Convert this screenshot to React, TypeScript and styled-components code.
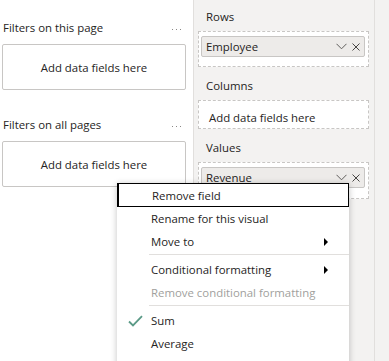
import React from "react";
import styled, { createGlobalStyle } from "styled-components";

const Global = createGlobalStyle`
  html, body { margin: 0; padding: 0; }
  body {
    font-family: "Open Sans", "Noto Sans", "Liberation Sans", sans-serif;
    color: #252423;
    background: #ffffff;
  }
`;

const Page = styled.div`
  position: relative;
  display: flex;
  width: 389px;
  height: 361px;
  overflow: hidden;
  font-size: 11.4px;
`;

const FilterPane = styled.div`
  width: 194px;
  flex: none;
  background: #ffffff;
  border-right: 1px solid #e1dfdd;
  padding: 19px 8px 0 2px;
  box-sizing: border-box;
  display: flex;
  flex-direction: column;
`;

const FilterHeader = styled.div<{ $first?: boolean }>`
  display: flex;
  align-items: center;
  justify-content: space-between;
  height: 16px;
  padding-left: 1px;
  margin-top: ${(p) => (p.$first ? "0" : "26px")};
  margin-bottom: 9px;
`;

const Ellipsis = styled.span`
  display: flex;
  gap: 3px;
  margin-right: 4px;
  margin-top: 4px;
`;

const Dot = styled.span`
  width: 1px;
  height: 1px;
  background: #8a8886;
`;

const FilterBox = styled.div`
  height: 46px;
  box-sizing: border-box;
  border: 1px solid #c8c6c4;
  border-radius: 2px;
  display: flex;
  align-items: center;
  justify-content: center;
  width: 184px;
`;

const FieldsPane = styled.div`
  width: 181px;
  flex: none;
  background: #f3f2f1;
  border-right: 1px solid #e1dfdd;
  box-sizing: border-box;
  padding: 9px 5px 0 4px;
  display: flex;
  flex-direction: column;
`;

const Gutter = styled.div`
  flex: 1;
  background: #f3f2f1;
`;

const WellLabel = styled.div<{ $first?: boolean }>`
  height: 16px;
  line-height: 16px;
  padding-left: 8px;
  margin-bottom: 6px;
  margin-top: ${(p) => (p.$first ? "0" : "11px")};
`;

const Well = styled.div<{ $height: number }>`
  height: ${(p) => p.$height}px;
  box-sizing: border-box;
  border: 1px dashed #c8c6c4;
  background: #ffffff;
  padding: 4px 3px 0 2px;
  display: flex;
  flex-direction: column;
`;

const WellHint = styled.div`
  padding-left: 8px;
  line-height: 26px;
`;

const Pill = styled.div`
  height: 21px;
  box-sizing: border-box;
  border: 1px solid #c8c6c4;
  border-radius: 2px;
  background: #edebe9;
  display: flex;
  align-items: center;
  padding: 0 4px 0 4px;
  gap: 5px;
`;

const PillName = styled.span`
  flex: 1;
`;

const Menu = styled.div`
  position: absolute;
  left: 117px;
  top: 183px;
  width: 232px;
  height: 190px;
  background: #ffffff;
  box-shadow: 0 0 6px rgba(0, 0, 0, 0.14), 0 3px 8px rgba(0, 0, 0, 0.1);
  box-sizing: border-box;
`;

const MenuItem = styled.div<{ $focused?: boolean; $disabled?: boolean }>`
  position: relative;
  height: 24px;
  box-sizing: border-box;
  display: flex;
  align-items: center;
  padding-left: 33px;
  color: ${(p) => (p.$disabled ? "#a19f9d" : "#252423")};
  border: 1px solid ${(p) => (p.$focused ? "#000000" : "transparent")};
  border-left-width: ${(p) => (p.$focused ? "2px" : "1px")};
  margin-bottom: -1px;
`;

const Separator = styled.div`
  height: 1px;
  background: #e1dfdd;
  margin: 2px 0 2px 32px;
`;

const SubArrow = styled.span`
  position: absolute;
  left: 206px;
  top: 8px;
  width: 0;
  height: 0;
  border-top: 4px solid transparent;
  border-bottom: 4px solid transparent;
  border-left: 4px solid #000000;
`;

const Check = styled.svg`
  position: absolute;
  left: 10px;
  top: 6px;
`;

const Chevron = () => (
  <svg width="11" height="7" viewBox="0 0 11 7">
    <path d="M0.5 0.8 L5.5 5.8 L10.5 0.8" fill="none" stroke="#605e5c" strokeWidth="1" />
  </svg>
);

const Close = () => (
  <svg width="8" height="8" viewBox="0 0 8 8">
    <path d="M0.5 0.5 L7.5 7.5 M7.5 0.5 L0.5 7.5" fill="none" stroke="#484644" strokeWidth="1" />
  </svg>
);

const FieldPill = ({ name }: { name: string }) => (
  <Pill>
    <PillName>{name}</PillName>
    <Chevron />
    <Close />
  </Pill>
);

const More = () => (
  <Ellipsis>
    <Dot />
    <Dot />
    <Dot />
  </Ellipsis>
);

export default function App() {
  return (
    <>
      <Global />
      <Page>
        <FilterPane>
          <FilterHeader $first>
            <span>Filters on this page</span>
            <More />
          </FilterHeader>
          <FilterBox>Add data fields here</FilterBox>
          <FilterHeader>
            <span>Filters on all pages</span>
            <More />
          </FilterHeader>
          <FilterBox>Add data fields here</FilterBox>
        </FilterPane>
        <FieldsPane>
          <WellLabel $first>Rows</WellLabel>
          <Well $height={36}>
            <FieldPill name="Employee" />
          </Well>
          <WellLabel>Columns</WellLabel>
          <Well $height={29}>
            <WellHint>Add data fields here</WellHint>
          </Well>
          <WellLabel>Values</WellLabel>
          <Well $height={37}>
            <FieldPill name="Revenue" />
          </Well>
        </FieldsPane>
        <Gutter />
        <Menu>
          <MenuItem $focused>Remove field</MenuItem>
          <MenuItem>Rename for this visual</MenuItem>
          <MenuItem>
            Move to
            <SubArrow />
          </MenuItem>
          <Separator />
          <MenuItem>
            Conditional formatting
            <SubArrow />
          </MenuItem>
          <MenuItem $disabled>Remove conditional formatting</MenuItem>
          <Separator />
          <MenuItem>
            <Check width="15" height="12" viewBox="0 0 15 12">
              <path d="M1 6.5 L5 10.5 L14 1.2" fill="none" stroke="#5b9a87" strokeWidth="1.8" />
            </Check>
            Sum
          </MenuItem>
          <MenuItem>Average</MenuItem>
        </Menu>
      </Page>
    </>
  );
}
